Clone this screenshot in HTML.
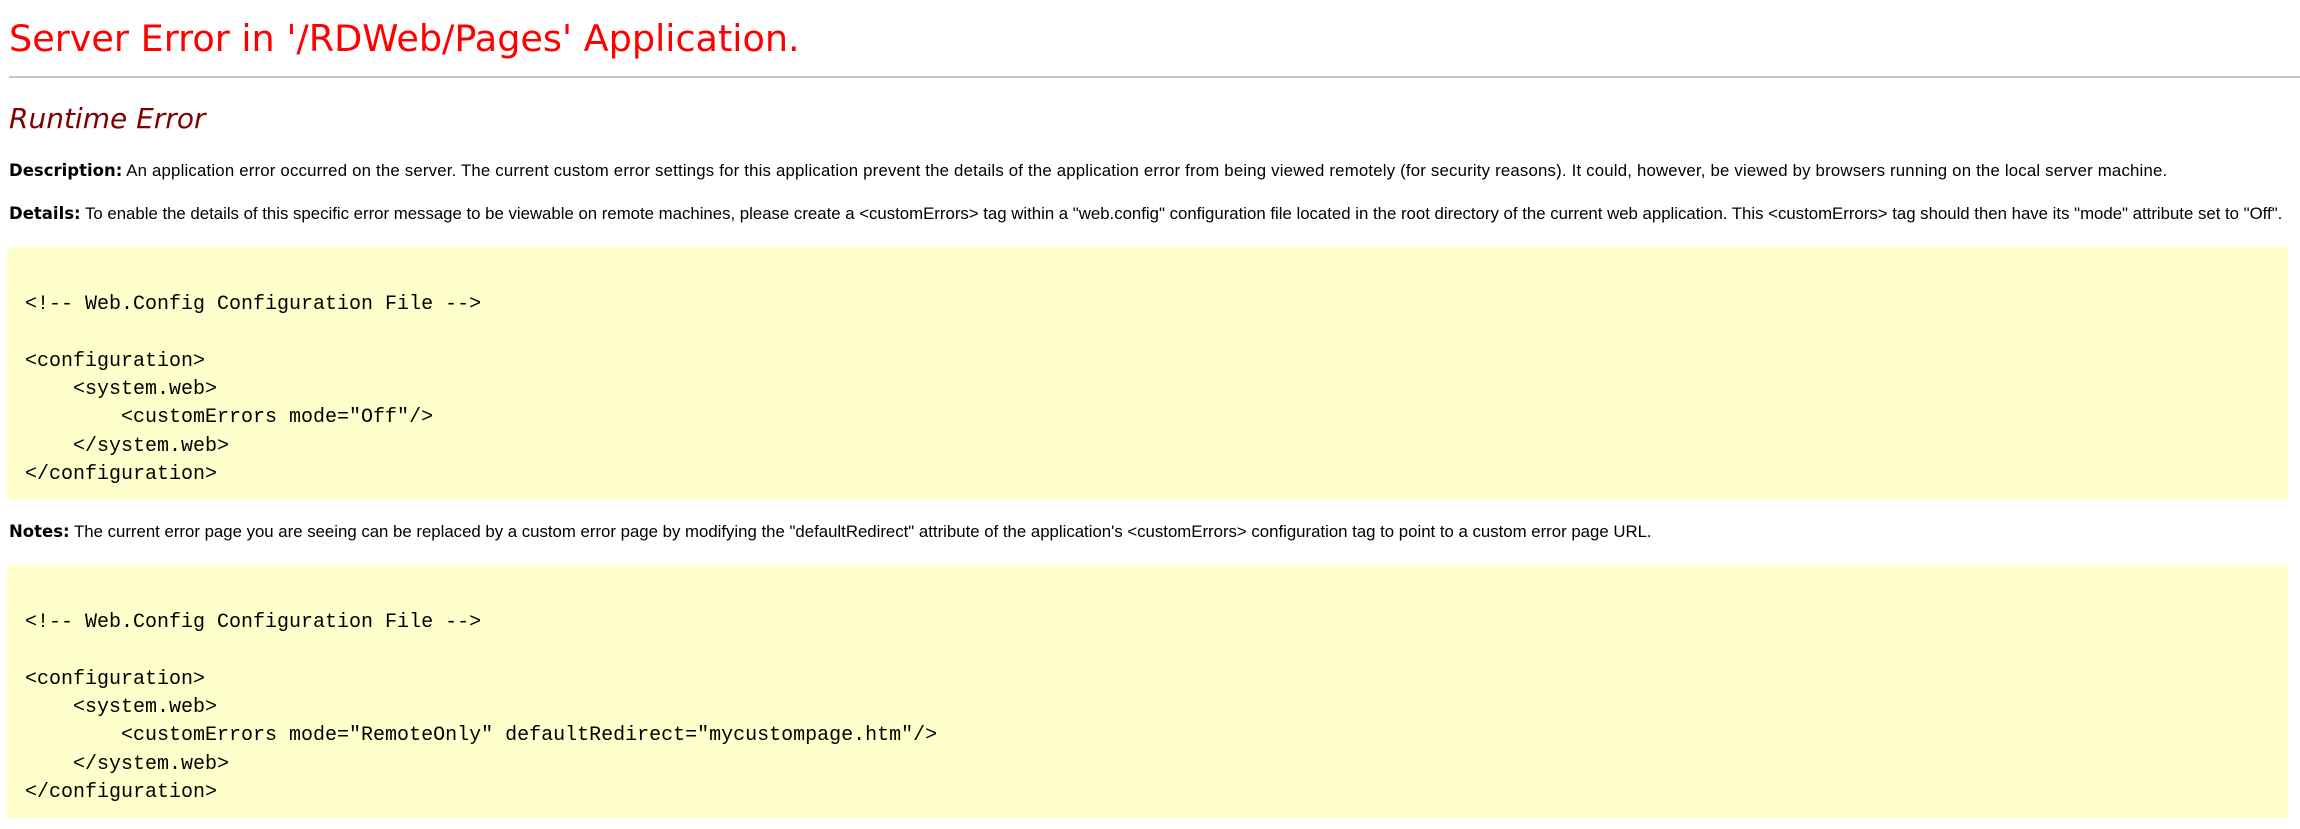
<!DOCTYPE html>
<html><head><meta charset="utf-8"><style>
html,body{margin:0;padding:0;background:#fff;width:2300px;height:829px;overflow:hidden;position:relative}
.a{position:absolute;white-space:nowrap;line-height:1}
.t{left:9px;top:21px;font-family:"DejaVu Sans",sans-serif;font-size:36.6px;color:#f00}
.hr{position:absolute;left:9px;right:0;top:76px;height:0;border-top:2px solid #c8c8c8}
.h2{left:9px;top:105px;font-family:"DejaVu Sans",sans-serif;font-style:italic;font-size:28px;color:#800000}
.p{left:9px;font-family:"Liberation Sans",Arial,sans-serif;font-size:16.8px;color:#000}
.p b{font-family:"DejaVu Sans",sans-serif;font-weight:bold;font-size:16.5px}
.pre{position:absolute;left:7px;width:2281px;box-sizing:border-box;height:253px;background:#ffffcc;margin:0;padding:16px 18px 14px;font-family:"Liberation Mono",monospace;font-size:20px;line-height:28.3px;color:#000;white-space:pre}
</style></head><body>
<div class="a t">Server Error in '/RDWeb/Pages' Application.</div>
<div class="hr"></div>
<div class="a h2">Runtime Error</div>
<div class="a p" style="top:163px;letter-spacing:0.19px"><b style="letter-spacing:0">Description:</b> An application error occurred on the server. The current custom error settings for this application prevent the details of the application error from being viewed remotely (for security reasons). It could, however, be viewed by browsers running on the local server machine.</div>
<div class="a p" style="top:206px"><b>Details:</b> To enable the details of this specific error message to be viewable on remote machines, please create a &lt;customErrors&gt; tag within a "web.config" configuration file located in the root directory of the current web application. This &lt;customErrors&gt; tag should then have its "mode" attribute set to "Off".</div>
<pre class="pre" style="top:247px">

&lt;!-- Web.Config Configuration File --&gt;

&lt;configuration&gt;
    &lt;system.web&gt;
        &lt;customErrors mode="Off"/&gt;
    &lt;/system.web&gt;
&lt;/configuration&gt;</pre>
<div class="a p" style="top:524px"><b>Notes:</b> The current error page you are seeing can be replaced by a custom error page by modifying the "defaultRedirect" attribute of the application's &lt;customErrors&gt; configuration tag to point to a custom error page URL.</div>
<pre class="pre" style="top:565px">

&lt;!-- Web.Config Configuration File --&gt;

&lt;configuration&gt;
    &lt;system.web&gt;
        &lt;customErrors mode="RemoteOnly" defaultRedirect="mycustompage.htm"/&gt;
    &lt;/system.web&gt;
&lt;/configuration&gt;</pre>
</body></html>
